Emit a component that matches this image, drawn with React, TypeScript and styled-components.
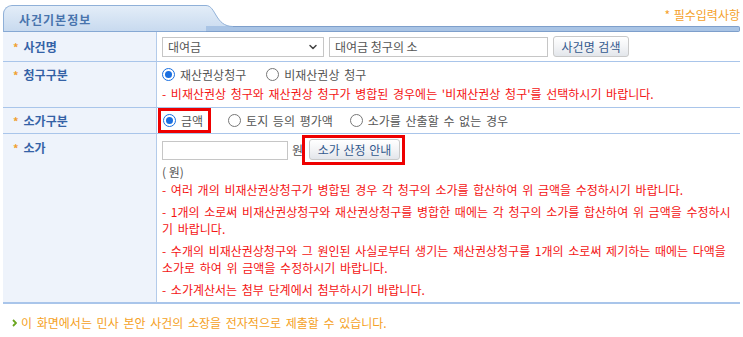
import styled, { createGlobalStyle } from "styled-components";
import { ChevronDown } from "lucide-react";

const GlobalStyle = createGlobalStyle`
    html, body {
        margin: 0;
        padding: 0;
        background: #fff;
    }
    body {
        font-family: "Noto Sans CJK KR", "Noto Sans", sans-serif;
        font-size: 12px;
        color: #555;
    }
`;

const Page = styled.div`
    width: 743px;
    padding: 5px 3px 0 3px;
    box-sizing: border-box;
`;

const Header = styled.div`
    display: flex;
    height: 27px;
`;

const Tab = styled.div`
    width: 203px;
    box-sizing: border-box;
    padding: 7px 0 0 15px;
    background: linear-gradient(to bottom, #e3edf8 0%, #c8daef 100%);
    border-top: 1px solid #8fb0d8;
    border-left: 1px solid #8fb0d8;
    border-bottom: 1px solid #86a8d3;
    border-top-left-radius: 9px;
    font-weight: 700;
    font-size: 12px;
    line-height: 14px;
    letter-spacing: 1px;
    color: #4874ad;
`;

const TabCurve = styled.svg`
    flex: none;
    display: block;
`;

const HeaderRest = styled.div`
    flex: 1;
    display: flex;
    flex-direction: column;
    justify-content: space-between;
`;

const Required = styled.div`
    align-self: flex-end;
    margin-top: 3px;
    color: #f5a12a;
    font-size: 12px;
    line-height: 14px;
    word-spacing: 1px;
`;

const Band = styled.div`
    height: 4px;
    background: #a9c4e5;
    border-top: 1px solid #7e9fcb;
    border-bottom: 1px solid #7e9fcb;
    border-right: 1px solid #7e9fcb;
    border-radius: 0 2px 2px 0;
`;

const Table = styled.div`
    display: grid;
    grid-template-columns: 154px 1fr;
    border-bottom: 2px solid #a9c5ea;
`;

const Label = styled.div<{ $pt: number }>`
    background: #eef3fb;
    border-right: 1px solid #b3cbea;
    border-bottom: 1px solid #a9c5ea;
    padding: ${(p) => p.$pt}px 0 0 10px;
    font-weight: 700;
    font-size: 12px;
    line-height: 14px;
    color: #3462a6;
    display: flex;
    gap: 5px;
    &:nth-last-child(2) {
        border-bottom: none;
    }
`;

const Star = styled.span`
    color: #f0a030;
    font-weight: 700;
    font-size: 11px;
`;

const Cell = styled.div<{ $h?: number }>`
    border-bottom: 1px solid #a9c5ea;
    padding: 0 0 0 5px;
    min-height: ${(p) => (p.$h ? `${p.$h}px` : "auto")};
    display: flex;
    flex-direction: column;
    justify-content: center;
    &:last-child {
        border-bottom: none;
        justify-content: flex-start;
    }
`;

const Line = styled.div<{ $gap?: number }>`
    display: flex;
    align-items: center;
    gap: ${(p) => p.$gap ?? 5}px;
`;

const SelectBox = styled.div`
    width: 162px;
    height: 20px;
    box-sizing: border-box;
    border: 1px solid #c6c6c6;
    display: flex;
    align-items: center;
    justify-content: space-between;
    padding: 0 4px 0 5px;
    color: #555;
    line-height: 14px;
`;

const TextBox = styled.div<{ $w: number; $h?: number }>`
    width: ${(p) => p.$w}px;
    height: ${(p) => p.$h ?? 20}px;
    box-sizing: border-box;
    border: 1px solid #c6c6c6;
    padding: 0 5px;
    display: flex;
    align-items: center;
    color: #555;
    line-height: 14px;
`;

const Button = styled.button<{ $w: number }>`
    width: ${(p) => p.$w}px;
    height: 21px;
    padding: 0;
    border: 1px solid #c9c9c9;
    border-radius: 3px;
    background: linear-gradient(to bottom, #ffffff 0%, #f3f4f6 50%, #e3e6eb 100%);
    font-family: "Noto Sans CJK KR", "Noto Sans", sans-serif;
    font-size: 12px;
    line-height: 14px;
    color: #345a8e;
    word-spacing: 1px;
`;

const RadioItem = styled.label`
    display: flex;
    align-items: center;
    gap: 5px;
    color: #555;
    line-height: 14px;
    word-spacing: 2px;
`;

const RadioDot = styled.span<{ $on?: boolean }>`
    width: 13px;
    height: 13px;
    box-sizing: border-box;
    border-radius: 50%;
    border: 1px solid ${(p) => (p.$on ? "#1a6fe0" : "#777")};
    background: #fff;
    display: flex;
    align-items: center;
    justify-content: center;
    &::after {
        content: "";
        width: 7px;
        height: 7px;
        border-radius: 50%;
        background: ${(p) => (p.$on ? "#1a6fe0" : "transparent")};
    }
`;

const Radios = styled.div<{ $gap: number }>`
    display: flex;
    align-items: center;
    gap: ${(p) => p.$gap}px;
`;

const RedBox = styled.div<{ $pad: string; $ml?: number; $h?: number }>`
    border: 3px solid #ee0000;
    padding: ${(p) => p.$pad};
    margin-left: ${(p) => p.$ml ?? 0}px;
    height: ${(p) => (p.$h ? `${p.$h}px` : "auto")};
    display: flex;
    align-items: center;
    box-sizing: border-box;
`;

const Warn = styled.p<{ $mt?: number; $mb?: number }>`
    margin: ${(p) => p.$mt ?? 5}px 0 ${(p) => p.$mb ?? 0}px 0;
    color: #f41414;
    font-size: 12px;
    line-height: 17px;
    word-spacing: 2px;
    white-space: nowrap;
`;

const Unit = styled.div<{ $ml?: number }>`
    color: #555;
    line-height: 14px;
    margin-left: ${(p) => p.$ml ?? 0}px;
`;

const Footer = styled.div`
    margin-top: 12px;
    padding-left: 9px;
    display: flex;
    align-items: center;
    gap: 4px;
    color: #f5a124;
    font-size: 12px;
    line-height: 14px;
    word-spacing: 2px;
`;

const Radio = ({ on, children }: { on?: boolean; children: string }) => (
    <RadioItem>
        <RadioDot $on={on} />
        {children}
    </RadioItem>
);

export default function App() {
    return (
        <Page>
            <GlobalStyle />
            <Header>
                <Tab>사건기본정보</Tab>
                <TabCurve width="27" height="27" viewBox="0 0 27 27">
                    <defs>
                        <linearGradient id="tabg" x1="0" y1="0" x2="0" y2="1">
                            <stop offset="0" stopColor="#e3edf8" />
                            <stop offset="1" stopColor="#c8daef" />
                        </linearGradient>
                    </defs>
                    <path d="M0 0.5 C10 0.5 9 21.5 27 21.5 L27 27 L0 27 Z" fill="url(#tabg)" />
                    <rect x="0" y="21" width="27" height="5" fill="#a9c4e5" />
                    <path d="M0 0.5 C10 0.5 9 21.5 27 21.5" fill="none" stroke="#8fb0d8" strokeWidth="1" />
                    <line x1="0" y1="26.5" x2="27" y2="26.5" stroke="#7e9fcb" strokeWidth="1" />
                </TabCurve>
                <HeaderRest>
                    <Required>* 필수입력사항</Required>
                    <Band />
                </HeaderRest>
            </Header>
            <Table>
                <Label $pt={8}>
                    <Star>*</Star>사건명
                </Label>
                <Cell $h={29}>
                    <Line>
                        <SelectBox>
                            대여금
                            <ChevronDown size={12} strokeWidth={3} color="#444" />
                        </SelectBox>
                        <TextBox $w={219}>대여금 청구의 소</TextBox>
                        <Button $w={76}>사건명 검색</Button>
                    </Line>
                </Cell>

                <Label $pt={6}>
                    <Star>*</Star>청구구분
                </Label>
                <Cell $h={45}>
                    <Radios $gap={20}>
                        <Radio on>재산권상청구</Radio>
                        <Radio>비재산권상 청구</Radio>
                    </Radios>
                    <Warn $mt={3}>
                        - 비재산권상 청구와 재산권상 청구가 병합된 경우에는 '비재산권상 청구'를 선택하시기 바랍니다.
                    </Warn>
                </Cell>

                <Label $pt={6}>
                    <Star>*</Star>소가구분
                </Label>
                <Cell $h={25}>
                    <Radios $gap={17}>
                        <RedBox $pad="0 5px 0 2px" $ml={-4} $h={25}>
                            <Radio on>금액</Radio>
                        </RedBox>
                        <Radio>토지 등의 평가액</Radio>
                        <Radio>소가를 산출할 수 없는 경우</Radio>
                    </Radios>
                </Cell>

                <Label $pt={7}>
                    <Star>*</Star>소가
                </Label>
                <Cell>
                    <Line $gap={0} style={{ marginTop: 1 }}>
                        <TextBox $w={126} $h={19} />
                        <Unit $ml={4}>원</Unit>
                        <RedBox $pad="1px 2px 2px 4px" $ml={-1}>
                            <Button $w={91}>소가 산정 안내</Button>
                        </RedBox>
                    </Line>
                    <Unit>( 원)</Unit>
                    <Warn $mt={2}>
                        - 여러 개의 비재산권상청구가 병합된 경우 각 청구의 소가를 합산하여 위 금액을 수정하시기 바랍니다.
                    </Warn>
                    <Warn>
                        - 1개의 소로써 비재산권상청구와 재산권상청구를 병합한 때에는 각 청구의 소가를 합산하여 위 금액을 수정하시
                        <br />기 바랍니다.
                    </Warn>
                    <Warn>
                        - 수개의 비재산권상청구와 그 원인된 사실로부터 생기는 재산권상청구를 1개의 소로써 제기하는 때에는 다액을
                        <br />
                        소가로 하여 위 금액을 수정하시기 바랍니다.
                    </Warn>
                    <Warn $mb={4}>- 소가계산서는 첨부 단계에서 첨부하시기 바랍니다.</Warn>
                </Cell>
            </Table>
            <Footer>
                <svg width="5" height="8" viewBox="0 0 5 8">
                    <path d="M1 1 L4 4 L1 7" fill="none" stroke="#6aa61e" strokeWidth="1.8" />
                </svg>
                이 화면에서는 민사 본안 사건의 소장을 전자적으로 제출할 수 있습니다.
            </Footer>
        </Page>
    );
}
